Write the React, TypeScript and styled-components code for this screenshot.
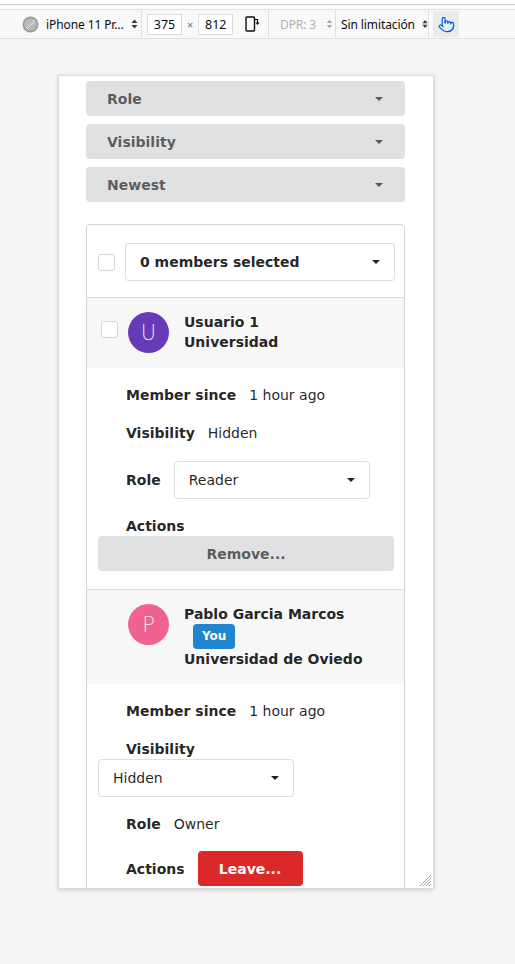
import React from "react";
import styled, { createGlobalStyle } from "styled-components";
import { Pointer } from "lucide-react";

const GlobalStyle = createGlobalStyle`
  html, body {
    margin: 0;
    padding: 0;
    background: #f5f5f5;
  }
  * {
    box-sizing: border-box;
  }
`;

type Member = {
    name: string;
    initial: string;
    color: string;
    org: string;
    isYou?: boolean;
};

const members: Member[] = [
    { name: "Usuario 1", initial: "U", color: "#673ab7", org: "Universidad" },
    {
        name: "Pablo Garcia Marcos",
        initial: "P",
        color: "#f06292",
        org: "Universidad de Oviedo",
        isYou: true,
    },
];

const filters = ["Role", "Visibility", "Newest"];

const Caret: React.FC<{ color?: string }> = ({ color = "rgba(0,0,0,.6)" }) => (
    <svg width="8" height="4" viewBox="0 0 8 4">
        <path d="M0 0 L8 0 L4 4 Z" fill={color} />
    </svg>
);

const UpDown: React.FC<{ color?: string }> = ({ color = "#38383d" }) => (
    <svg width="7" height="10" viewBox="0 0 7 10">
        <path d="M0.5 4 L3.5 0.5 L6.5 4 Z M0.5 6 L3.5 9.5 L6.5 6 Z" fill={color} />
    </svg>
);

const NoNetworkIcon = () => (
    <svg width="17" height="17" viewBox="0 0 17 17">
        <circle cx="8.5" cy="8.5" r="8" fill="#9d9d9f" />
        <circle cx="8.5" cy="8.5" r="6.2" fill="#b8b8ba" />
        <path d="M5 12 L12 5" stroke="#ffffff" strokeWidth="1.6" strokeLinecap="round" />
        <path d="M5 12 L12 5" stroke="#6d6d70" strokeWidth="0.6" strokeLinecap="round" />
    </svg>
);

const RotateIcon = () => (
    <svg width="16" height="18" viewBox="0 0 16 18">
        <rect x="1" y="2" width="8.5" height="14" rx="1" fill="none" stroke="#0c0c0d" strokeWidth="1.4" />
        <path d="M9.5 4.5 H12.5 V8" fill="none" stroke="#0c0c0d" strokeWidth="1.2" />
        <path d="M10.5 7.5 L12.5 10 L14.5 7.5 Z" fill="#0c0c0d" />
    </svg>
);

const ResizeGrip = () => (
    <svg width="13" height="13" viewBox="0 0 13 13">
        <path
            d="M12 1 L1 12 M12 4 L4 12 M12 7 L7 12 M12 10 L10 12"
            stroke="#a8a8a8"
            strokeWidth="1"
        />
    </svg>
);

export default function App() {
    return (
        <Page>
            <GlobalStyle />
            <TopStrip />
            <Toolbar>
                <ToolGroup width={141} padLeft={22} gap={7}>
                    <NoNetworkIcon />
                    <ToolText>iPhone 11 Pr…</ToolText>
                    <UpDown />
                </ToolGroup>
                <ToolSeparator />
                <ToolGroup width={126} padLeft={5} gap={5}>
                    <SizeInput width={35}>375</SizeInput>
                    <Times>×</Times>
                    <SizeInput width={35}>812</SizeInput>
                    <RotateSlot>
                        <RotateIcon />
                    </RotateSlot>
                </ToolGroup>
                <ToolSeparator />
                <ToolGroup width={66} padLeft={11} gap={7}>
                    <ToolText muted>DPR: 3</ToolText>
                    <UpDown color="#b1b1b3" />
                </ToolGroup>
                <ToolSeparator />
                <ToolGroup width={92} padLeft={5} gap={7}>
                    <ToolText>Sin limitación</ToolText>
                    <UpDown />
                </ToolGroup>
                <ToolSeparator />
                <TouchButton>
                    <Pointer size={17} color="#0060df" strokeWidth={1.7} />
                </TouchButton>
            </Toolbar>

            <DeviceFrame>
                <Viewport>
                    <FilterList>
                        {filters.map((f) => (
                            <FilterButton key={f}>
                                {f}
                                <Caret />
                            </FilterButton>
                        ))}
                    </FilterList>

                    <MembersCard>
                        <SelectionBar>
                            <Checkbox />
                            <Dropdown bold grow>
                                0 members selected
                                <Caret color="rgba(0,0,0,.87)" />
                            </Dropdown>
                        </SelectionBar>

                        {members.map((m) => (
                            <React.Fragment key={m.name}>
                                <MemberHeader>
                                    <CheckSlot>{!m.isYou && <Checkbox />}</CheckSlot>
                                    <Avatar color={m.color}>{m.initial}</Avatar>
                                    <MemberInfo>
                                        <BoldLine>{m.name}</BoldLine>
                                        {m.isYou && <YouLabel>You</YouLabel>}
                                        <BoldLine>{m.org}</BoldLine>
                                    </MemberInfo>
                                </MemberHeader>

                                {m.isYou ? (
                                    <Details top={17} gap={17}>
                                        <DetailRow>
                                            <Label>Member since</Label>
                                            <Value>1 hour ago</Value>
                                        </DetailRow>
                                        <StackBlock offset={1}>
                                            <DetailRow>
                                                <Label>Visibility</Label>
                                            </DetailRow>
                                            <Dropdown width={196}>
                                                Hidden
                                                <Caret color="rgba(0,0,0,.87)" />
                                            </Dropdown>
                                        </StackBlock>
                                        <DetailRow>
                                            <Label>Role</Label>
                                            <Value>Owner</Value>
                                        </DetailRow>
                                        <DetailRow>
                                            <Label>Actions</Label>
                                            <ActionButton danger>Leave...</ActionButton>
                                        </DetailRow>
                                    </Details>
                                ) : (
                                    <Details top={17} gap={18}>
                                        <DetailRow>
                                            <Label>Member since</Label>
                                            <Value>1 hour ago</Value>
                                        </DetailRow>
                                        <DetailRow>
                                            <Label>Visibility</Label>
                                            <Value>Hidden</Value>
                                        </DetailRow>
                                        <DetailRow>
                                            <Label>Role</Label>
                                            <Dropdown width={196}>
                                                Reader
                                                <Caret color="rgba(0,0,0,.87)" />
                                            </Dropdown>
                                        </DetailRow>
                                        <StackBlock offset={-1}>
                                            <DetailRow>
                                                <Label>Actions</Label>
                                            </DetailRow>
                                            <ActionButton full>Remove...</ActionButton>
                                        </StackBlock>
                                    </Details>
                                )}
                            </React.Fragment>
                        ))}
                    </MembersCard>
                </Viewport>
                <Grip>
                    <ResizeGrip />
                </Grip>
            </DeviceFrame>
        </Page>
    );
}

const Page = styled.div`
    min-height: 964px;
    background: #f5f5f5;
    font-family: "DejaVu Sans", "Noto Sans", sans-serif;
`;

const TopStrip = styled.div`
    height: 10px;
    background: #fbfbfb;
    border-top: 4px solid #ffffff;
    box-shadow: inset 0 1px 0 #cfcfd1;
    border-bottom: 1px solid #e0e0e2;
`;

const Toolbar = styled.div`
    display: flex;
    align-items: stretch;
    height: 29px;
    background: #f9f9fa;
    border-bottom: 1px solid #e0e0e2;
    font-family: "Noto Sans", "Open Sans", sans-serif;
    font-size: 12px;
    color: #0c0c0d;
`;

const ToolGroup = styled.div<{ width: number; padLeft: number; gap: number }>`
    display: flex;
    align-items: center;
    gap: ${(p) => p.gap}px;
    width: ${(p) => p.width}px;
    padding-left: ${(p) => p.padLeft}px;
    flex-shrink: 0;
`;

const ToolText = styled.span<{ muted?: boolean }>`
    color: ${(p) => (p.muted ? "#b1b1b3" : "#0c0c0d")};
    white-space: nowrap;
    letter-spacing: -0.1px;
    margin-right: ${(p) => (p.muted ? "3px" : "0")};
`;

const ToolSeparator = styled.div`
    width: 1px;
    background: #e0e0e2;
    flex-shrink: 0;
`;

const SizeInput = styled.div<{ width: number }>`
    width: ${(p) => p.width}px;
    height: 21px;
    background: #ffffff;
    border: 1px solid #dcdcde;
    display: flex;
    align-items: center;
    justify-content: center;
    font-size: 12.5px;
`;

const Times = styled.span`
    color: #737373;
    font-size: 11px;
`;

const RotateSlot = styled.div`
    display: flex;
    margin-left: 7px;
`;

const TouchButton = styled.div`
    width: 26px;
    height: 26px;
    margin: 1px 0 0 4px;
    background: #ebebef;
    display: flex;
    align-items: center;
    justify-content: center;
    border-radius: 2px;
`;

const DeviceFrame = styled.div`
    position: relative;
    margin: 36px 0 0 58px;
    width: 376px;
    height: 814px;
    border: 1px solid #dddddd;
    background: #ffffff;
    box-shadow: 0 1px 4px rgba(0, 0, 0, 0.18);
    overflow: hidden;
`;

const Viewport = styled.div`
    padding: 5px 28px 0 27px;
    color: rgba(0, 0, 0, 0.87);
    font-size: 14px;
    line-height: 20px;
`;

const Grip = styled.div`
    position: absolute;
    right: 1px;
    bottom: 1px;
    display: flex;
`;

const FilterList = styled.div`
    display: flex;
    flex-direction: column;
    gap: 8px;
`;

const FilterButton = styled.div`
    height: 35px;
    display: flex;
    align-items: center;
    justify-content: space-between;
    padding: 0 22px 0 21px;
    border-radius: 4px;
    background: #e0e1e2;
    color: rgba(0, 0, 0, 0.6);
    font-weight: bold;
`;

const MembersCard = styled.div`
    margin-top: 22px;
    border: 1px solid #d4d4d5;
    border-radius: 4px;
`;

const SelectionBar = styled.div`
    display: flex;
    align-items: center;
    gap: 10px;
    padding: 18px 9px 16px 11px;
    border-bottom: 1px solid #dedede;
`;

const Checkbox = styled.div`
    width: 17px;
    height: 17px;
    flex-shrink: 0;
    border: 1px solid #d4d4d5;
    border-radius: 3px;
    background: #ffffff;
`;

const Dropdown = styled.div<{ bold?: boolean; grow?: boolean; width?: number }>`
    display: flex;
    align-items: center;
    justify-content: space-between;
    height: 38px;
    ${(p) => (p.grow ? "flex: 1;" : `width: ${p.width}px; flex-shrink: 0;`)}
    padding: 0 14px 0 14px;
    border: 1px solid rgba(34, 36, 38, 0.15);
    border-radius: 4px;
    background: #ffffff;
    font-weight: ${(p) => (p.bold ? "bold" : "normal")};
    color: rgba(0, 0, 0, 0.87);
`;

const MemberHeader = styled.div`
    display: flex;
    align-items: flex-start;
    padding: 14px 10px 15px 14px;
    background: #f7f7f7;
`;

const CheckSlot = styled.div`
    width: 17px;
    margin: 9px 10px 0 0;
    flex-shrink: 0;
`;

const Avatar = styled.div<{ color: string }>`
    width: 41px;
    height: 41px;
    border-radius: 50%;
    flex-shrink: 0;
    background: ${(p) => p.color};
    color: rgba(255, 255, 255, 0.85);
    display: flex;
    align-items: center;
    justify-content: center;
    font-size: 21px;
    font-weight: 300;
`;

const MemberInfo = styled.div`
    display: flex;
    flex-direction: column;
    align-items: flex-start;
    margin: 0 0 0 15px;
`;

const BoldLine = styled.div`
    font-weight: bold;
`;

const YouLabel = styled.span`
    margin-left: 9px;
    padding: 0 9px;
    height: 25px;
    line-height: 25px;
    border-radius: 4px;
    background: #2185d0;
    color: #ffffff;
    font-size: 12px;
    font-weight: bold;
`;

const Details = styled.div<{ top: number; gap: number }>`
    display: flex;
    flex-direction: column;
    gap: ${(p) => p.gap}px;
    padding: ${(p) => p.top}px 10px 18px 11px;
    border-bottom: 1px solid #dedede;
`;

const DetailRow = styled.div`
    display: flex;
    align-items: center;
    gap: 13px;
    padding-left: 28px;
`;

const StackBlock = styled.div<{ offset: number }>`
    display: flex;
    flex-direction: column;
    margin-top: ${(p) => p.offset}px;
`;

const Label = styled.span`
    font-weight: bold;
`;

const Value = styled.span`
    font-weight: normal;
`;

const ActionButton = styled.div<{ danger?: boolean; full?: boolean }>`
    height: 35px;
    display: flex;
    align-items: center;
    justify-content: center;
    border-radius: 4px;
    font-weight: bold;
    ${(p) => (p.full ? "width: 100%;" : "width: 105px;")}
    background: ${(p) => (p.danger ? "#db2828" : "#e0e1e2")};
    color: ${(p) => (p.danger ? "#ffffff" : "rgba(0, 0, 0, 0.6)")};
`;
